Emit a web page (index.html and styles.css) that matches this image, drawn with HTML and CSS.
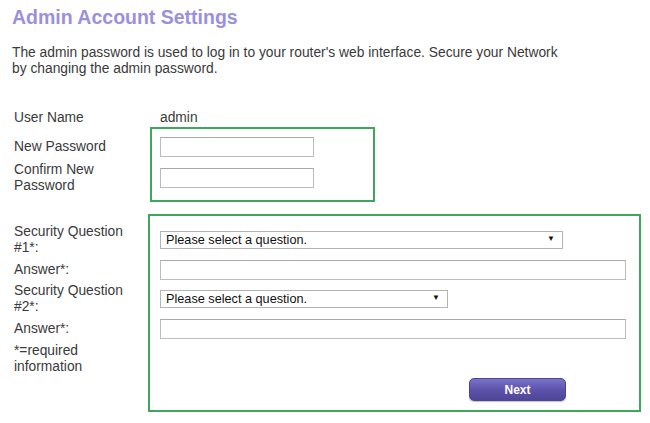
FILE: index.html
```html
<!DOCTYPE html>
<html lang="en">
<head>
<meta charset="UTF-8">
<title>Admin Account Settings</title>
<link rel="stylesheet" href="styles.css">
</head>
<body>

<div class="page">

 <h1>Admin Account Settings</h1>

 <p class="intro">The admin password is used to log in to your router's web interface. Secure your Network<br>by changing the admin password.</p>

 <!-- USER NAME -->
 <div class="user-row">
  <div class="lbl-col">User Name</div>
  <div class="user-val">admin</div>
 </div>

 <!-- PASSWORD -->
 <div class="group">
  <div class="labels pw-labels">
   <div class="lbl h20">New Password</div>
   <div class="lbl h20">Confirm New Password</div>
  </div>
  <div class="box pw-box">
   <input type="password" class="txt short">
   <input type="password" class="txt short">
  </div>
 </div>

 <!-- SECURITY QUESTIONS -->
 <div class="group sec-group">
  <div class="labels sec-labels">
   <div class="lbl h18">Security Question #1*:</div>
   <div class="lbl h20 g11">Answer*:</div>
   <div class="lbl h18 g10">Security Question #2*:</div>
   <div class="lbl h20 g11">Answer*:</div>
   <div class="lbl note">*=required information</div>
  </div>
  <div class="box sec-box">
   <div class="sel-wrap wide">
    <select><option>Please select a question.</option></select>
   </div>
   <input type="text" class="txt long g11">
   <div class="sel-wrap mid g10">
    <select><option>Please select a question.</option></select>
   </div>
   <input type="text" class="txt long g11">
   <button class="next-btn">Next</button>
  </div>
 </div>

</div>

</body>
</html>
```

FILE: styles.css
```css
body{
 margin:0;
 background:#fff;
 color:#3a3a3a;
 font-family:"Liberation Sans", Arial, Helvetica, sans-serif;
 font-size:13.8px;
}

.page{
 padding:0 0 0 12px;
}

h1{
 margin:6px 0 0;
 font-size:19.5px;
 line-height:22px;
 color:#9a90dc;
 font-weight:bold;
}

.intro{
 margin:17px 0 0;
 line-height:16px;
}

/* USER NAME */
.user-row{
 display:flex;
 margin-top:33px;
 line-height:16px;
}
.lbl-col{
 width:136px;
 padding-left:2px;
 box-sizing:border-box;
}
.user-val{
 padding-left:12px;
}

/* GROUPS */
.group{
 display:flex;
 margin-top:1px;
}
.sec-group{
 margin-top:12px;
}

.labels{
 flex:0 0 136px;
 padding-left:2px;
 box-sizing:border-box;
 display:flex;
 flex-direction:column;
}
.pw-labels{padding-top:10px;}
.pw-labels .lbl + .lbl{margin-top:11px;}
.sec-labels{padding-top:17px;}

.lbl{
 display:flex;
 align-items:center;
 max-width:116px;
 line-height:16px;
}

/* FIELDS */
.txt{
 height:20px;
 box-sizing:border-box;
 border:1px solid #bcbcbc;
 border-top-color:#a9a9a9;
 background:#fff;
 margin:0;
 padding:0 3px;
 font:inherit;
}
.short{width:154px;}
.long{width:466px;}

.sel-wrap{
 position:relative;
 height:18px;
}
.sel-wrap.wide{width:403px;}
.sel-wrap.mid{width:288px;}
.sel-wrap select{
 appearance:none;
 -webkit-appearance:none;
 width:100%;
 height:18px;
 margin:0;
 border:1px solid #b4b4b4;
 border-radius:0;
 background:#fff;
 color:#111;
 font:inherit;
 font-size:12.7px;
 padding:0 0 0 5px;
 line-height:16px;
}
.sel-wrap::after{
 content:"\25BC";
 position:absolute;
 right:8px;
 top:3px;
 font-size:8px;
 color:#111;
 pointer-events:none;
}

/* row heights and gaps */
.h18{height:18px;}
.h20{height:20px;}
.g10{margin-top:10px;}
.g11{margin-top:11px;}
.note{margin-top:4px;}

/* GREEN BOXES */
.box{
 flex:none;
 border:2px solid #3fa65a;
 box-sizing:border-box;
 display:flex;
 flex-direction:column;
 align-items:flex-start;
}
.pw-box{
 width:225px;
 margin-left:2px;
 padding:8px 0 12px 8px;
}
.pw-box .txt + .txt{margin-top:11px;}
.sec-box{
 width:493px;
 padding:15px 13px 9px 10px;
}

/* NEXT */
.next-btn{
 margin:39px 0 0 309px;
 width:97px;
 height:23px;
 border:1px solid #4d4496;
 border-radius:5px;
 background:linear-gradient(#7a71c9,#5b51a9 55%,#4f4699);
 color:#fff;
 font:bold 12px "Liberation Sans", Arial, sans-serif;
 cursor:pointer;
 box-shadow:0 1px 1px rgba(0,0,0,.25);
}
```
